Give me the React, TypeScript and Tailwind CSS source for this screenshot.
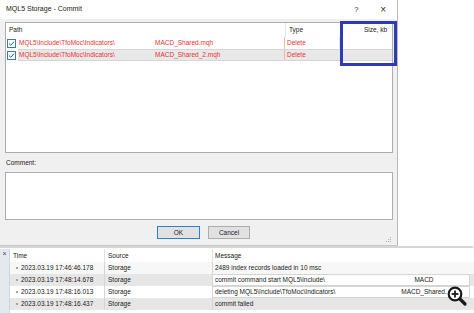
const font = { fontFamily: '"Liberation Sans", Arial, sans-serif' }

type LogRow = { time: string; msg: string; extra?: string; boxed?: boolean; bg: string }

const logRows: LogRow[] = [
  { time: '2023.03.19 17:46:46.178', msg: '2489 index records loaded in 10 msc', bg: 'bg-[#f7f7f7]' },
  { time: '2023.03.19 17:48:14.678', msg: 'commit command start MQL5\\Include\\', extra: 'MACD', boxed: true, bg: 'bg-[#e6e6e6]' },
  { time: '2023.03.19 17:48:16.013', msg: 'deleting MQL5\\Include\\TfoMoc\\Indicators\\', extra: 'MACD_Shared.', boxed: true, bg: 'bg-white' },
  { time: '2023.03.19 17:48:16.437', msg: 'commit failed', bg: 'bg-[#e6e6e6]' },
]

const files = [
  { path: 'MQL5\\Include\\TfoMoc\\Indicators\\', name: 'MACD_Shared.mqh' },
  { path: 'MQL5\\Include\\TfoMoc\\Indicators\\', name: 'MACD_Shared_2.mqh' },
]

const Check = () => (
  <span className="w-[9px] h-[9px] border border-[#3b78b5] bg-white flex items-center justify-center shrink-0">
    <svg width="7" height="7" viewBox="0 0 7 7">
      <path d="M1 3.6 L2.8 5.3 L6 1.6" fill="none" stroke="#2a5f9e" strokeWidth="1" />
    </svg>
  </span>
)

const Dialog = () => (
  <div className="w-[398px] h-[246px] flex flex-col border-r border-[#b9b9b9] border-b border-b-[#c8c8c8] bg-[#f0f0f0]">
    <div className="h-[19px] bg-white flex items-center pl-[6px] pr-[11px] text-[7px] text-[#222]">
      <span className="flex-1">MQL5 Storage - Commit</span>
      <span className="w-[26px] text-[7.5px]">?</span>
      <span className="text-[10px] leading-none text-[#333]">×</span>
    </div>
    <div className="flex-1 flex flex-col pl-[5px] pr-[4px] pt-[3px]">
      <div className="h-[131px] border border-[#adadad] bg-white flex flex-col">
        <div className="h-[14px] flex items-center text-[6.5px] text-[#222]">
          <span className="w-[279px] pl-[3px]">Path</span>
          <span className="w-[55px] h-full flex items-center pl-[3px] border-l border-[#e5e5e5]">Type</span>
          <span className="flex-1 h-full flex items-center justify-end pr-[5px] border-l border-[#e5e5e5]">Size, kb</span>
        </div>
        {files.map((f, i) => (
          <div key={i} className="h-[12px] flex items-center text-[6.5px] text-[#e8312f]">
            <span className="w-[12px] pl-[1px] flex items-center">
              <Check />
            </span>
            <div
              className={`flex-1 h-full flex items-center ${
                i === 1 ? 'bg-[#e8e8e8] border-y border-[#d6d6d6]' : ''
              }`}
            >
              <span className="w-[137px] pl-[1px]">{f.path}</span>
              <span className="w-[129px]">{f.name}</span>
              <span className="w-[55px] h-full flex items-center pl-[2px] border-l border-[#f3b5b5]">Delete</span>
              <span className="flex-1 h-full border-l border-[#e5e5e5]" />
            </div>
          </div>
        ))}
      </div>
      <div className="h-[19px] flex items-center pl-[1px] text-[6.5px] text-[#222]">Comment:</div>
      <div className="h-[48px] border border-[#adadad] bg-white" />
      <div className="flex-1 flex pt-[6px] pl-[152px] gap-[8px] text-[6.5px] text-[#222] relative">
        <span className="w-[43px] h-[13px] border border-[#2f7fd0] bg-[#e1e1e1] flex items-center justify-center">
          OK
        </span>
        <span className="w-[42px] h-[13px] border border-[#adadad] bg-[#e1e1e1] flex items-center justify-center">
          Cancel
        </span>
        <svg className="absolute right-[1px] bottom-[2px]" width="6" height="6" viewBox="0 0 6 6">
          <rect x="4" y="0" width="1" height="1" fill="#b0b0b0" />
          <rect x="2" y="2" width="1" height="1" fill="#b0b0b0" />
          <rect x="4" y="2" width="1" height="1" fill="#b0b0b0" />
          <rect x="0" y="4" width="1" height="1" fill="#b0b0b0" />
          <rect x="2" y="4" width="1" height="1" fill="#b0b0b0" />
          <rect x="4" y="4" width="1" height="1" fill="#b0b0b0" />
        </svg>
      </div>
    </div>
  </div>
)

const Journal = () => (
  <div className="flex flex-1 text-[6.5px] text-[#222]">
    <div className="w-[10px] bg-[#e4e9f0] border-r border-[#cfd6df] flex justify-center pt-[1px]">
      <span className="text-[7px] leading-none text-[#444]">×</span>
    </div>
    <div className="flex-1 flex flex-col bg-white">
      <div className="h-[13px] flex items-center">
        <span className="w-[94px] pl-[3px]">Time</span>
        <span className="w-[108px] h-full flex items-center pl-[3px] border-l border-[#e0e0e0]">Source</span>
        <span className="flex-1 h-full flex items-center pl-[2px] border-l border-[#e0e0e0]">Message</span>
      </div>
      {logRows.map((r, i) => (
        <div key={i} className={`h-[12px] flex items-center ${r.bg}`}>
          <span className="w-[94px] flex items-center pl-[6px] gap-[3px]">
            <span className="w-[2px] h-[2px] bg-[#9aa7b5]" />
            {r.time}
          </span>
          <span className="w-[108px] h-full flex items-center pl-[3px] border-l border-[#d5d5d5]">Storage</span>
          <span
            className={`flex-1 h-full flex items-center pl-[2px] border-l border-[#d5d5d5] ${
              r.boxed ? 'bg-white border-y border-r border-[#9e9e9e] mr-[4px]' : ''
            }`}
          >
            <span className="w-[183px] shrink-0">{r.msg}</span>
            {r.extra && <span className="w-[52px] text-center">{r.extra}</span>}
          </span>
        </div>
      ))}
    </div>
  </div>
)

export default function App() {
  return (
    <div className="w-[474px] h-[313px] bg-white relative overflow-hidden flex flex-col" style={font}>
      <div className="flex">
        <Dialog />
        <div className="flex-1 bg-white" />
      </div>
      <div className="h-[3px] bg-white border-t-[2px] border-[#d6d6d6] mr-[1px]" />
      <Journal />
      <div className="absolute left-[340px] top-[21px] w-[57px] h-[45px] border-[3px] border-[#2e3bb4]" />
      <svg className="absolute left-[446px] top-[285px]" width="22" height="22" viewBox="0 0 22 22">
        <line x1="12.5" y1="12.5" x2="19" y2="19" stroke="#1a1a1a" strokeWidth="3.2" strokeLinecap="round" />
        <circle cx="9" cy="9" r="6.3" fill="white" stroke="#1a1a1a" strokeWidth="2.2" />
        <line x1="9" y1="5.6" x2="9" y2="12.4" stroke="#1a1a1a" strokeWidth="1.8" />
        <line x1="5.6" y1="9" x2="12.4" y2="9" stroke="#1a1a1a" strokeWidth="1.8" />
      </svg>
    </div>
  )
}
